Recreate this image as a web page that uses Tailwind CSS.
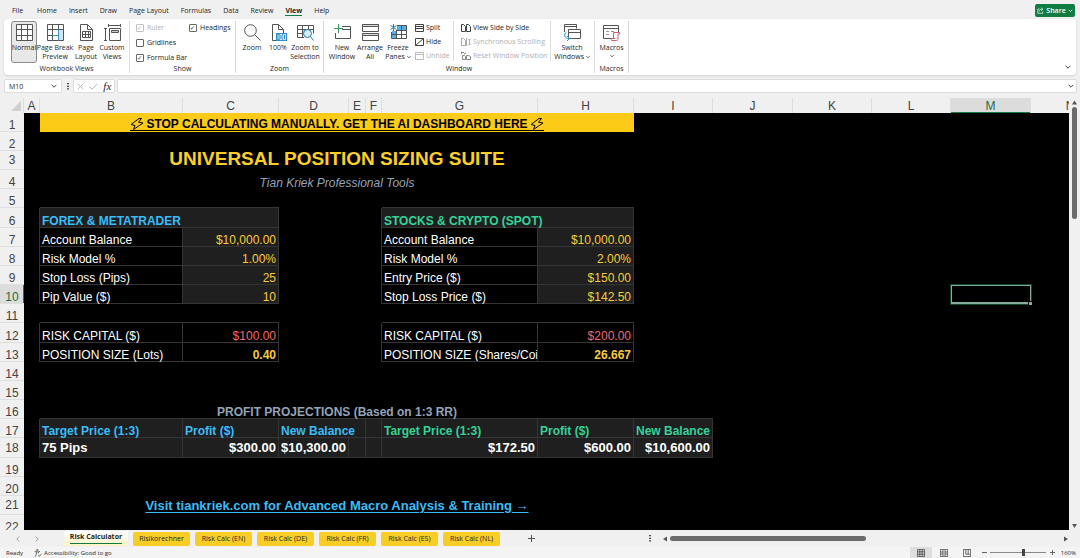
<!DOCTYPE html>
<html lang="en">
<head>
    <meta charset="UTF-8">
    <meta name="viewport" content="width=device-width, initial-scale=1.0">
    <title>Risk Calculator</title>
    <script src="https://cdn.jsdelivr.net/npm/@tailwindcss/browser@4"></script>
</head>
<body class="h-screen flex flex-col overflow-hidden bg-[#f0f0f0] font-['Open_Sans',sans-serif] text-[7px] leading-[9px] text-[#262626]">

    <!-- Menu tabs -->
    <nav class="h-[19px] shrink-0 flex items-center justify-between pl-3 pr-[5px]">
        <div class="flex items-center gap-3 pt-[2px]">
            <a href="#">File</a>
            <a href="#" class="pl-[2px]">Home</a>
            <a href="#">Insert</a>
            <a href="#">Draw</a>
            <a href="#">Page Layout</a>
            <a href="#">Formulas</a>
            <a href="#">Data</a>
            <a href="#">Review</a>
            <a href="#" class="font-bold border-b border-[#107c41]">View</a>
            <a href="#">Help</a>
        </div>
        <button type="button" class="h-[13px] w-10 mt-[2px] flex items-center justify-center gap-[2px] rounded-[2px] bg-[#107c41] text-white font-semibold">
            <svg class="size-[7px]" viewBox="0 0 14 14" fill="none" stroke="currentColor" stroke-width="1.4"><path d="M5 4H1.5v8.500h10V9M4.500 9c0-3 2-4.500 5-4.500M8 1.500l4 3-4 3"/></svg>
            Share
            <svg class="size-[5px]" viewBox="0 0 10 10" fill="none" stroke="currentColor" stroke-width="1.600"><path d="M1.500 3.500 5 7l3.500-3.500"/></svg>
        </button>
    </nav>

    <!-- Ribbon -->
    <div class="h-14 shrink-0 mx-1 flex rounded-[4px] bg-white shadow-sm whitespace-nowrap">
        <section class="w-[126px] border-r border-[#dcdcdc] my-[2px] flex flex-col justify-between">
            <div class="flex pl-[7px]">
                <button type="button" class="w-[26px] h-[42px] pt-[2px] flex flex-col items-center gap-[2px] rounded-[3px] border border-[#8a8a8a] bg-[#e8e8e8]">
                    <svg class="size-[17px]" viewBox="0 0 17 17" fill="#fff" stroke="#555"><path d="M.5.500h16v16H.500zM5.500.500v16M11.500.500v16M.500 5.500h16M.500 11.500h16"/></svg>
                    Normal
                </button>
                <button type="button" class="w-9 pt-[3px] flex flex-col items-center gap-[2px]">
                    <svg class="size-[17px]" viewBox="0 0 17 17" fill="none"><path fill="#cfe8f7" d="M11 6h5v10h-5z"/><path stroke="#555" d="M.500.500h16v16H.500zM.500 5.500h16M5.500.500v16M11.500.500v5M.500 11.500h5"/><path stroke="#3a96c8" d="M11.500 5.500v11M5.500 11.500h6"/></svg>
                    <span>Page Break<br>Preview</span>
                </button>
                <button type="button" class="w-[26px] pt-[3px] flex flex-col items-center gap-[2px]">
                    <svg class="size-[17px]" viewBox="0 0 17 17" fill="none" stroke="#555"><path d="M2.500.500h7l5 5v11h-12zM9.500.500v5h5M4.500 7.500h8v6h-8zM4.500 10.500h8M7.500 7.500v6M10.500 7.500v6"/></svg>
                    <span>Page<br>Layout</span>
                </button>
                <button type="button" class="w-[26px] pt-[3px] flex flex-col items-center gap-[2px]">
                    <svg class="size-[17px]" viewBox="0 0 17 17" fill="none" stroke="#555"><path d="M5.500 4.500h11v12h-11zM1.500 4v13M0 4.500h3M0 16.500h3M4.500 1.500h12M4.500 0v3M16.500 0v3"/><path fill="#ccc" d="M7.500 6.500h7v2h-7z"/></svg>
                    <span>Custom<br>Views</span>
                </button>
            </div>
            <h2 class="text-center">Workbook Views</h2>
        </section>

        <section class="w-[106px] border-r border-[#dcdcdc] my-[2px] flex flex-col justify-between">
            <div class="grid grid-cols-[53px_50px] gap-y-[6px] pl-[6px] pt-[2px]">
                <label class="flex items-center gap-[3px] text-[#b0b0b0]"><input type="checkbox" checked disabled class="appearance-none size-[8px] rounded-[1px] border border-[#c4c4c4] text-[6px] leading-[6px] checked:before:content-['✓'] before:block">Ruler</label>
                <label class="flex items-center gap-[3px]"><input type="checkbox" checked class="appearance-none size-[8px] rounded-[1px] border border-[#666] text-[6px] leading-[6px] checked:before:content-['✓'] before:block">Headings</label>
                <label class="flex items-center gap-[3px] col-span-2"><input type="checkbox" class="appearance-none size-[8px] rounded-[1px] border border-[#666] text-[6px] leading-[6px] checked:before:content-['✓'] before:block">Gridlines</label>
                <label class="flex items-center gap-[3px] col-span-2"><input type="checkbox" checked class="appearance-none size-[8px] rounded-[1px] border border-[#666] text-[6px] leading-[6px] checked:before:content-['✓'] before:block">Formula Bar</label>
            </div>
            <h2 class="text-center">Show</h2>
        </section>

        <section class="w-[88px] border-r border-[#dcdcdc] my-[2px] flex flex-col justify-between">
            <div class="flex pl-[3px]">
                <button type="button" class="w-[26px] pt-[3px] flex flex-col items-center gap-[2px]">
                    <svg class="size-[17px]" viewBox="0 0 17 17" fill="none" stroke="#555"><circle cx="6.500" cy="6.500" r="5.800"/><path d="m10.700 10.700 5.800 5.800"/></svg>
                    Zoom
                </button>
                <button type="button" class="w-[26px] pt-[3px] flex flex-col items-center gap-[2px]">
                    <svg class="size-[17px]" viewBox="0 0 17 17" fill="none" stroke="#555"><path d="M6 16.500H2.500V.500h6l5 5v4M8.500.500v5h5"/><path fill="#2b8fd0" stroke="none" d="M6 9h11v8H6z"/><path stroke="#fff" stroke-width=".8" d="M8 10.500v5M10 10.500h2v5h-2zM13.500 10.500h2v5h-2z"/></svg>
                    100%
                </button>
                <button type="button" class="w-7 pt-[3px] flex flex-col items-center gap-[2px]">
                    <svg class="size-[17px]" viewBox="0 0 17 17" fill="none" stroke="#555"><path fill="#9dcbed" stroke="none" d="M6 6h6v5H6z"/><path d="M7 13.500H.500v-12h16v8M.500 5.500h16M.500 9.500h6M5.500 1.500v12M11.500 1.500v4"/><circle cx="10.500" cy="9.500" r="4" fill="#d9edfa" stroke="#1f7fc0"/><path stroke="#1f7fc0" d="m13.500 12.500 3 4"/></svg>
                    <span>Zoom to<br>Selection</span>
                </button>
            </div>
            <h2 class="text-center">Zoom</h2>
        </section>

        <section class="w-[271px] border-r border-[#dcdcdc] my-[2px] flex flex-col justify-between">
            <div class="flex pl-1">
                <button type="button" class="w-7 pt-[3px] flex flex-col items-center gap-[2px]">
                    <svg class="size-[17px]" viewBox="0 0 17 17" fill="none" stroke="#555"><path d="M8 2.500h8.500v12H1.500V9M8 5.500h8.500"/><path stroke="#2e9e5b" d="M4.500 0v9M0 4.500h9"/></svg>
                    <span>New<br>Window</span>
                </button>
                <button type="button" class="w-7 pt-[3px] flex flex-col items-center gap-[2px]">
                    <svg class="size-[17px]" viewBox="0 0 17 17" fill="none" stroke="#555"><path d="M.500.500h16v7H.500zM.500 9.500h16v7H.500z"/><path fill="#ddd" d="M.500.500h16v2H.500zM.500 9.500h16v2H.500z"/></svg>
                    <span>Arrange<br>All</span>
                </button>
                <button type="button" class="w-7 pt-[3px] flex flex-col items-center gap-[2px]">
                    <svg class="size-[17px]" viewBox="0 0 17 17" fill="none"><path fill="#58aee6" d="M7 2h10v4H7zM2 7h5v8H2z"/><path stroke="#555" d="M7 1.500h9.500v13h-15V8M1.500 10.500h15M6.500 6v8.500M11.500 1.500v13M7 6.500h9.500"/><path stroke="#1f7fc0" d="M3.500 0v7M.500 1.500l6 4M6.500 1.500l-6 4"/></svg>
                    <span>Freeze<br>Panes <svg class="inline size-[4px]" viewBox="0 0 10 10" fill="none" stroke="#333" stroke-width="2"><path d="M1 3l4 4 4-4"/></svg></span>
                </button>
                <div class="flex flex-col gap-[5px] pl-[3px] pt-[2px] w-[42px] border-r border-[#dcdcdc]">
                    <button type="button" class="flex items-center gap-[2px]"><svg class="w-[9px] h-[8px]" viewBox="0 0 9 8" fill="none" stroke="#444"><path d="M.500.500h8v7h-8zM.500 2.500h8M.500 4.500h8"/></svg>Split</button>
                    <button type="button" class="flex items-center gap-[2px]"><svg class="w-[9px] h-[8px]" viewBox="0 0 9 8" fill="none" stroke="#444"><path d="M.500.500h8v7h-8zM.500 7.500l8-7"/></svg>Hide</button>
                    <button type="button" disabled class="flex items-center gap-[2px] text-[#b0b0b0]"><svg class="w-[9px] h-[8px]" viewBox="0 0 9 8" fill="none" stroke="#bbb"><path d="M.500.500h8v7h-8zM.500 2.500h8"/></svg>Unhide</button>
                </div>
                <div class="flex flex-col gap-[5px] pl-[7px] pt-[2px] w-[97px] border-r border-[#dcdcdc]">
                    <button type="button" class="flex items-center gap-[2px]"><svg class="w-[10px] h-[8px]" viewBox="0 0 10 8" fill="none" stroke="#444"><path d="M.500.500h2l2 2v5h-4zM5.500.500h2l2 2v5h-4z"/></svg>View Side by Side</button>
                    <button type="button" disabled class="flex items-center gap-[2px] text-[#b0b0b0]"><svg class="w-[10px] h-[8px]" viewBox="0 0 10 8" fill="none" stroke="#aaa"><path d="M.500.500h2l2 2v5h-4zM6.500 7.500h-1v-7h1M8.500 1v6M7.500 2l1-1 1 1M7.500 6l1 1 1-1"/></svg>Synchronous Scrolling</button>
                    <button type="button" disabled class="flex items-center gap-[2px] text-[#b0b0b0]"><svg class="w-[10px] h-[8px]" viewBox="0 0 10 8" fill="none" stroke="#888"><path d="M1.500 3.500h2l1 1v3h-3zM5.500 3.500h2l2 1v3h-4zM0 .500h3M.500 0v2M3 2l2-1"/></svg>Reset Window Position</button>
                </div>
                <button type="button" class="w-[42px] pt-[3px] flex flex-col items-center gap-[2px]">
                    <svg class="size-[17px]" viewBox="0 0 17 17" fill="none" stroke="#555"><path d="M.500 8V.500h12v4M.500 2.500h12M4.500 5.500h12v9h-12zM4.500 8.500h12"/><path stroke="#2b8fd0" d="M2.500 8C-.500 10 0 14.500 5 14.500M3 12l2.500 2.500L3 17"/></svg>
                    <span>Switch<br>Windows <svg class="inline size-[4px]" viewBox="0 0 10 10" fill="none" stroke="#333" stroke-width="2"><path d="M1 3l4 4 4-4"/></svg></span>
                </button>
            </div>
            <h2 class="text-center">Window</h2>
        </section>

        <section class="w-[34px] border-r border-[#dcdcdc] my-[2px] flex flex-col justify-between">
            <button type="button" class="pt-[3px] flex flex-col items-center gap-[2px]">
                <svg class="size-[17px]" viewBox="0 0 17 17" fill="none" stroke="#555"><path d="M9 14.500H.500v-13h15V8M.500 4.500h15"/><path stroke="#999" d="M3 7.500h3M8 7.500h3M3 10.500h3"/><path fill="#fff" stroke="#e0596b" d="M10.500 14V8.500h6v1.500h-1.500v5.500c0 1-1 1-1.500 1H9c-1 0-1-2 0-2h3.500"/></svg>
                Macros
                <svg class="size-[4px]" viewBox="0 0 10 10" fill="none" stroke="#333" stroke-width="2"><path d="M1 3l4 4 4-4"/></svg>
            </button>
            <h2 class="text-center">Macros</h2>
        </section>
        <button type="button" aria-label="Collapse ribbon" class="ml-auto self-end mr-[5px] mb-[5px]">
            <svg class="size-[6px]" viewBox="0 0 10 10" fill="none" stroke="#333" stroke-width="1.600"><path d="M1 3l4 4 4-4"/></svg>
        </button>
    </div>

    <!-- Formula bar -->
    <div class="h-[14px] shrink-0 mt-1 mb-[5px] ml-1 mr-[3px] flex">
        <label class="w-[58px] flex items-center justify-between px-1 bg-white border border-[#dcdcdc] rounded-[2px]">
            <input type="text" aria-label="Name box" value="M10" class="w-8 outline-none">
            <svg class="size-[6px]" viewBox="0 0 10 10" fill="none" stroke="#333" stroke-width="1.500"><path d="M1 3l4 4 4-4"/></svg>
        </label>
        <span class="w-[11px] flex items-center justify-center"><svg class="w-[2px] h-[7px]" viewBox="0 0 2 8" fill="#333"><path d="M0 0h2v1.500H0zM0 3h2v1.500H0zM0 6h2v1.500H0z"/></svg></span>
        <div class="w-[42px] flex items-center justify-around bg-white border border-[#dcdcdc] rounded-[2px]">
            <svg class="size-[7px]" viewBox="0 0 10 10" fill="none" stroke="#b5b5b5" stroke-width="1.300"><path d="M1 1l8 8M9 1l-8 8"/></svg>
            <svg class="w-[9px] h-[7px]" viewBox="0 0 12 9" fill="none" stroke="#b5b5b5" stroke-width="1.300"><path d="M1 5l3 3 7-7"/></svg>
            <button type="button" class="font-['Liberation_Serif',serif] italic text-[11px]">fx</button>
        </div>
        <label class="flex-1 ml-[2px] pr-[2px] flex items-center bg-white border border-[#dcdcdc] rounded-[2px]">
            <input type="text" aria-label="Formula" class="flex-1 outline-none">
            <svg class="size-[6px]" viewBox="0 0 10 10" fill="none" stroke="#333" stroke-width="1.500"><path d="M1 3l4 4 4-4"/></svg>
        </label>
    </div>

    <!-- Sheet -->
    <main class="flex-1 min-h-0 flex">
        <div class="flex-1 min-w-0 overflow-hidden bg-black">
            <table class="w-[1110px] table-fixed border-separate border-spacing-0 whitespace-nowrap font-['Liberation_Sans',Arial,sans-serif] text-[12px] leading-[12px] text-white">
                <colgroup>
                    <col class="w-6"><col class="w-4"><col class="w-[143px]"><col class="w-24"><col class="w-[70px]"><col class="w-[17px]"><col class="w-4"><col class="w-[156px]"><col class="w-24"><col class="w-[79px]"><col class="w-20"><col class="w-[79px]"><col class="w-[79px]"><col class="w-20"><col class="w-[79px]">
                </colgroup>
                <thead>
                    <tr class="h-[15px] bg-[#f0f0f0] text-[#444] *:p-0 *:font-normal *:align-middle *:border-r *:border-[#dedede]">
                        <td><svg class="ml-auto mr-[2px] size-[10px]" viewBox="0 0 10 10" fill="#d0d0d0"><path d="M10 0v10H0z"/></svg></td>
                        <th>A</th><th>B</th><th>C</th><th>D</th><th>E</th><th>F</th><th>G</th><th>H</th><th>I</th><th>J</th><th>K</th><th>L</th>
                        <th class="bg-[#dcdcdc] text-[#1b6e43] shadow-[inset_0_-1px_0_#107c41]">M</th><th>N</th>
                    </tr>
                </thead>
                <tbody class="[&_td]:px-[2px] [&_td]:py-0 [&_th]:p-0 [&_th]:font-normal [&_th]:text-[#444] [&_th]:bg-[#f0f0f0] [&_th]:border-b [&_th]:border-[#dedede] [&_td]:border-[#353535]">
                    <tr class="h-[19px] align-bottom"><th>1</th><td></td>
                        <td colspan="7" class="bg-[#fbcb17] text-center"><a href="#" class="font-bold text-black inline-flex items-end gap-[2px] border-b border-black"><svg class="w-[14px] h-[12px]" viewBox="0 0 14 12" fill="none" stroke="#000" stroke-linejoin="round"><path d="M9 .500 1 6.500 5 7.500 3.500 11.500 13 5 8.500 4.200 11.500.500z"/></svg>STOP CALCULATING MANUALLY. GET THE AI DASHBOARD HERE<svg class="w-[14px] h-[12px]" viewBox="0 0 14 12" fill="none" stroke="#000" stroke-linejoin="round"><path d="M9 .500 1 6.500 5 7.500 3.500 11.500 13 5 8.500 4.200 11.500.500z"/></svg></a></td>
                        <td colspan="6"></td></tr>
                    <tr class="h-[19px] align-bottom"><th>2</th><td colspan="14"></td></tr>
                    <tr class="h-[19px] align-middle"><th>3</th><td></td><td colspan="7" class="text-center align-top text-[19px] leading-[15px] font-bold text-[#fbcf26]">UNIVERSAL POSITION SIZING SUITE</td><td colspan="6"></td></tr>
                    <tr class="h-[19px] align-bottom"><th>4</th><td></td><td colspan="7" class="text-center italic text-[#94a3b8]">Tian Kriek Professional Tools</td><td colspan="6"></td></tr>
                    <tr class="h-[19px] align-bottom"><th>5</th><td></td><td colspan="2" class="border-b"></td><td colspan="3"></td><td colspan="2" class="border-b"></td><td colspan="6"></td></tr>
                    <tr class="h-5 align-bottom"><th>6</th><td class="border-r"></td><td colspan="2" class="border-r border-b bg-[#1f1f1f] font-bold text-[#38bdf8]">FOREX &amp; METATRADER</td><td colspan="3" class="border-r"></td><td colspan="2" class="border-r border-b bg-[#1f1f1f] font-bold text-[#34d399]">STOCKS &amp; CRYPTO (SPOT)</td><td colspan="6"></td></tr>
                    <tr class="h-[19px] align-bottom"><th>7</th><td class="border-r"></td><td class="border-r border-b">Account Balance</td><td class="border-r border-b bg-[#1f1f1f] text-right text-[#facc33]">$10,000.00</td><td colspan="3" class="border-r"></td><td class="border-r border-b">Account Balance</td><td class="border-r border-b bg-[#1f1f1f] text-right text-[#facc33]">$10,000.00</td><td colspan="6"></td></tr>
                    <tr class="h-[19px] align-bottom"><th>8</th><td class="border-r"></td><td class="border-r border-b">Risk Model %</td><td class="border-r border-b bg-[#1f1f1f] text-right text-[#facc33]">1.00%</td><td colspan="3" class="border-r"></td><td class="border-r border-b">Risk Model %</td><td class="border-r border-b bg-[#1f1f1f] text-right text-[#facc33]">2.00%</td><td colspan="6"></td></tr>
                    <tr class="h-[19px] align-bottom"><th>9</th><td class="border-r"></td><td class="border-r border-b">Stop Loss (Pips)</td><td class="border-r border-b bg-[#1f1f1f] text-right text-[#facc33]">25</td><td colspan="3" class="border-r"></td><td class="border-r border-b">Entry Price ($)</td><td class="border-r border-b bg-[#1f1f1f] text-right text-[#facc33]">$150.00</td><td colspan="6"></td></tr>
                    <tr class="h-[19px] align-bottom"><th class="bg-[#dcdcdc]! text-[#1b6e43]! shadow-[inset_-1px_0_0_#107c41]">10</th><td class="border-r"></td><td class="border-r border-b">Pip Value ($)</td><td class="border-r border-b bg-[#1f1f1f] text-right text-[#facc33]">10</td><td colspan="3" class="border-r"></td><td class="border-r border-b">Stop Loss Price ($)</td><td class="border-r border-b bg-[#1f1f1f] text-right text-[#facc33]">$142.50</td><td colspan="4"></td>
                        <td class="relative"><span class="absolute inset-0 border border-b-2 border-[#86ad9c] outline outline-[#0d4a2a]"></span><span class="absolute -right-px -bottom-px size-[4px] bg-[#86ad9c] border-l border-t border-black"></span></td><td></td></tr>
                    <tr class="h-[19px] align-bottom"><th>11</th><td></td><td colspan="2" class="border-b"></td><td colspan="3"></td><td colspan="2" class="border-b"></td><td colspan="6"></td></tr>
                    <tr class="h-5 align-bottom"><th>12</th><td class="border-r"></td><td class="border-r border-b">RISK CAPITAL ($)</td><td class="border-r border-b text-right text-[#f0686f]">$100.00</td><td colspan="3" class="border-r"></td><td class="border-r border-b">RISK CAPITAL ($)</td><td class="border-r border-b text-right text-[#f0686f]">$200.00</td><td colspan="6"></td></tr>
                    <tr class="h-[19px] align-bottom"><th>13</th><td class="border-r"></td><td class="border-r border-b">POSITION SIZE (Lots)</td><td class="border-r border-b text-right font-bold text-[#facc33]">0.40</td><td colspan="3" class="border-r"></td><td class="border-r border-b overflow-hidden pr-0!">POSITION SIZE (Shares/Coins)</td><td class="border-r border-b text-right font-bold text-[#facc33]">26.667</td><td colspan="6"></td></tr>
                    <tr class="h-[19px] align-bottom"><th>14</th><td colspan="14"></td></tr>
                    <tr class="h-[19px] align-bottom"><th>15</th><td colspan="14"></td></tr>
                    <tr class="h-[19px] align-bottom"><th>16</th><td></td><td colspan="7" class="border-b text-center font-bold text-[#94a3b8]">PROFIT PROJECTIONS (Based on 1:3 RR)</td><td class="border-b"></td><td colspan="5"></td></tr>
                    <tr class="h-[19px] align-bottom font-bold"><th>17</th><td class="border-r"></td><td class="border-r border-b bg-[#1f1f1f] text-[#38bdf8]">Target Price (1:3)</td><td class="border-r border-b bg-[#1f1f1f] text-[#38bdf8]">Profit ($)</td><td colspan="2" class="border-r border-b bg-[#1f1f1f] text-[#38bdf8]">New Balance</td><td class="border-r border-b bg-[#1f1f1f]"></td><td class="border-r border-b bg-[#1f1f1f] text-[#34d399]">Target Price (1:3)</td><td class="border-r border-b bg-[#1f1f1f] text-[#34d399]">Profit ($)</td><td class="border-r border-b bg-[#1f1f1f] text-[#34d399]">New Balance</td><td colspan="5"></td></tr>
                    <tr class="h-5 align-middle font-bold [&>td]:text-[13px]"><th>18</th><td class="border-r"></td><td class="border-r border-b bg-[#1f1f1f]">75 Pips</td><td class="border-r border-b bg-[#1f1f1f] text-right">$300.00</td><td class="border-r border-b bg-[#1f1f1f]">$10,300.00</td><td class="border-r border-b bg-[#1f1f1f]"></td><td class="border-r border-b bg-[#1f1f1f]"></td><td class="border-r border-b bg-[#1f1f1f] text-right">$172.50</td><td class="border-r border-b bg-[#1f1f1f] text-right">$600.00</td><td class="border-r border-b bg-[#1f1f1f] text-right">$10,600.00</td><td colspan="5"></td></tr>
                    <tr class="h-[19px] align-bottom"><th>19</th><td colspan="14"></td></tr>
                    <tr class="h-[19px] align-bottom"><th>20</th><td colspan="14"></td></tr>
                    <tr class="h-[19px] align-middle"><th>21</th><td></td><td colspan="7" class="text-center"><a href="#" class="text-[13px] font-bold text-[#38bdf8] underline underline-offset-2">Visit tiankriek.com for Advanced Macro Analysis &amp; Training →</a></td><td colspan="6"></td></tr>
                    <tr class="h-[19px] align-bottom"><th>22</th><td colspan="14"></td></tr>
                </tbody>
            </table>
        </div>
        <div class="w-[11px] flex flex-col items-center justify-between py-[2px]">
            <div class="flex flex-col items-center gap-[2px]">
                <svg class="w-[5px] h-[5px]" viewBox="0 0 6 5" fill="#555"><path d="M3 0l3 5H0z"/></svg>
                <div class="w-[5px] h-28 rounded-full bg-[#6b6b6b]"></div>
            </div>
            <svg class="w-[5px] h-[4px]" viewBox="0 0 6 5" fill="#555"><path d="M3 5l3-5H0z"/></svg>
        </div>
    </main>

    <!-- Sheet tabs -->
    <div class="h-[17px] shrink-0 flex items-center text-[7px]">
        <div class="w-[60%] flex items-center">
            <div class="w-16 flex gap-[13px] pl-[15px]">
                <button type="button" aria-label="Previous sheet"><svg class="size-[6px]" viewBox="0 0 10 10" fill="none" stroke="#999" stroke-width="1.500"><path d="M7 1 3 5l4 4"/></svg></button>
                <button type="button" aria-label="Next sheet"><svg class="size-[6px]" viewBox="0 0 10 10" fill="none" stroke="#999" stroke-width="1.500"><path d="m3 1 4 4-4 4"/></svg></button>
            </div>
            <div class="flex items-center gap-[5px]">
                <button type="button" class="w-16 h-[15px] flex justify-center bg-linear-to-b from-white to-[#fdf3c4] font-bold"><span class="h-[13px] leading-[12px] border-b border-[#107c41]">Risk Calculator</span></button>
                <button type="button" class="w-[57px] h-[14px] rounded-[2px] bg-[#f8cd25]">Risikorechner</button>
                <button type="button" class="w-[57px] h-[14px] rounded-[2px] bg-[#f8cd25]">Risk Calc (EN)</button>
                <button type="button" class="w-[57px] h-[14px] rounded-[2px] bg-[#f8cd25]">Risk Calc (DE)</button>
                <button type="button" class="w-[57px] h-[14px] rounded-[2px] bg-[#f8cd25]">Risk Calc (FR)</button>
                <button type="button" class="w-[57px] h-[14px] rounded-[2px] bg-[#f8cd25]">Risk Calc (ES)</button>
                <button type="button" class="w-[57px] h-[14px] rounded-[2px] bg-[#f8cd25]">Risk Calc (NL)</button>
            </div>
            <button type="button" aria-label="New sheet" class="ml-7"><svg class="size-[7px]" viewBox="0 0 7 7" fill="none" stroke="#555"><path d="M3.500 0v7M0 3.500h7"/></svg></button>
        </div>
        <div class="flex-1 flex items-center gap-[3px] pr-3">
            <svg class="w-[2px] h-[7px] ml-px mr-[9px]" viewBox="0 0 2 8" fill="#333"><path d="M0 0h2v1.500H0zM0 3h2v1.500H0zM0 6h2v1.500H0z"/></svg>
            <svg class="w-[4px] h-[6px]" viewBox="0 0 5 6" fill="#555"><path d="M0 3l5-3v6z"/></svg>
            <div class="flex-1"><div class="w-1/2 h-[5px] rounded-full bg-[#6b6b6b]"></div></div>
            <svg class="w-[4px] h-[6px]" viewBox="0 0 5 6" fill="#555"><path d="M5 3 0 0v6z"/></svg>
        </div>
    </div>

    <!-- Status bar -->
    <footer class="h-[11px] shrink-0 flex items-center justify-between pl-[6px] pr-1 bg-[#f4f4f4] text-[6px] leading-[8px]">
        <div class="flex items-center gap-[11px]">
            <span>Ready</span>
            <span class="flex items-center gap-[2px]"><svg class="size-[8px]" viewBox="0 0 12 12" fill="none" stroke="#444" stroke-width="1.100"><circle cx="5" cy="1.800" r="1.200"/><path d="M1 3.500c2.500 1 5.500 1 8 0M3.500 4.500v3l-1.500 4M6.500 4.500v2M6 9l2 2 3.500-4"/></svg>Accessibility: Good to go</span>
        </div>
        <div class="flex items-center">
            <button type="button" aria-label="Normal view" class="w-[22px] h-[11px] flex items-center justify-center bg-[#dedede]"><svg class="w-[8px] h-[8px]" viewBox="0 0 10 10" fill="none" stroke="#444"><path d="M.500.500h9v9h-9zM3.500.500v9M6.500.500v9M.500 3.500h9M.500 6.500h9"/></svg></button>
            <button type="button" aria-label="Page layout" class="w-6 flex justify-center"><svg class="w-[8px] h-[8px]" viewBox="0 0 10 10" fill="none" stroke="#444"><path d="M.500.500h9v9h-9zM2.500 2.500h5v5h-5zM2.500 5h5"/></svg></button>
            <button type="button" aria-label="Page break preview" class="w-[22px] flex justify-center"><svg class="w-[8px] h-[8px]" viewBox="0 0 10 10" fill="none" stroke="#444"><path d="M.500.500h9v9h-9zM3.500.500v6h5M6.500.500v6"/></svg></button>
            <button type="button" aria-label="Zoom out" class="w-3 flex justify-center"><svg class="size-[5px]" viewBox="0 0 5 5" stroke="#666"><path d="M0 2.500h5"/></svg></button>
            <input type="range" aria-label="Zoom" min="0" max="100" value="60" class="appearance-none w-14 h-px bg-[#888] [&::-webkit-slider-thumb]:appearance-none [&::-webkit-slider-thumb]:w-[3px] [&::-webkit-slider-thumb]:h-[7px] [&::-webkit-slider-thumb]:bg-[#444]">
            <button type="button" aria-label="Zoom in" class="w-3 flex justify-center"><svg class="size-[5px]" viewBox="0 0 5 5" stroke="#666"><path d="M0 2.500h5M2.500 0v5"/></svg></button>
            <span class="w-[18px] text-right">160%</span>
        </div>
    </footer>
</body>
</html>
